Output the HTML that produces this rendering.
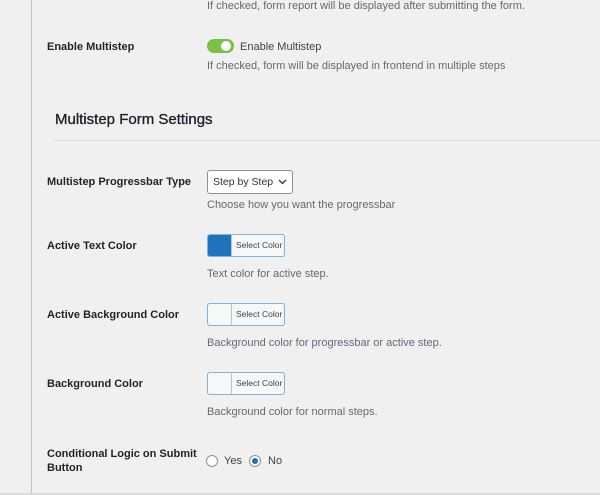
<!DOCTYPE html>
<html><head><style>
body{margin:0;width:600px;height:495px;background:#f0f0f1;font-family:"Liberation Sans",sans-serif;position:relative;overflow:hidden;color:#1d2327}
.a{position:absolute;white-space:nowrap}
.lbl{font-size:11px;font-weight:bold;color:#1d2327}
.d{font-size:11px;color:#646970}
.cp{position:absolute;left:207px;width:76px;height:21px;border:1px solid #7fb4d8;border-radius:3px;background:#f6f7f7;overflow:hidden}
.cp .sw{position:absolute;left:0;top:0;width:23px;height:21px;border-right:1px solid #c3c4c7}
.cp span{position:absolute;left:28px;top:5px;font-size:8.5px;color:#3c434a}
</style></head><body>
<div class="a" style="left:31px;top:0;width:1px;height:495px;background:#c3c4c7"></div>
<div class="a" style="left:0;top:493px;width:600px;height:2px;background:#dcdcde"></div>
<div class="a d" style="left:207px;top:0px">If checked, form report will be displayed after submitting the form.</div>
<div class="a lbl" style="left:47px;top:41px">Enable Multistep</div>
<div class="a" style="left:207px;top:39px;width:27px;height:14px;border-radius:7px;background:#7ac143"></div>
<div class="a" style="left:221px;top:41px;width:10px;height:10px;border-radius:50%;background:#fff"></div>
<div class="a" style="left:240px;top:41px;font-size:11px;color:#3c434a">Enable Multistep</div>
<div class="a d" style="left:207px;top:60px">If checked, form will be displayed in frontend in multiple steps</div>
<div class="a" style="left:55px;top:111px;font-size:15px;-webkit-text-stroke:0.35px #1d2327;color:#1d2327">Multistep Form Settings</div>
<div class="a" style="left:54px;top:140px;width:546px;height:1px;background:#dcdcde"></div>
<div class="a lbl" style="left:47px;top:176px">Multistep Progressbar Type</div>
<div class="a" style="left:207px;top:170px;width:84px;height:22px;border:1px solid #8c8f94;border-radius:3px;background:#fff"></div>
<div class="a" style="left:213px;top:176px;font-size:10.5px;color:#2c3338">Step by Step</div>
<svg class="a" style="left:278px;top:179px" width="9" height="6"><path d="M1 1l3.5 3.5L8 1" stroke="#2c3338" stroke-width="1.3" fill="none"/></svg>
<div class="a d" style="left:207px;top:199px">Choose how you want the progressbar</div>
<div class="a lbl" style="left:47px;top:240px">Active Text Color</div>
<div class="cp" style="top:234px"><div class="sw" style="background:#1e73be"></div><span>Select Color</span></div>
<div class="a d" style="left:207px;top:268px">Text color for active step.</div>
<div class="a lbl" style="left:47px;top:309px">Active Background Color</div>
<div class="cp" style="top:303px"><div class="sw"></div><span>Select Color</span></div>
<div class="a d" style="left:207px;top:337px">Background color for progressbar or active step.</div>
<div class="a lbl" style="left:47px;top:378px">Background Color</div>
<div class="cp" style="top:372px"><div class="sw"></div><span>Select Color</span></div>
<div class="a d" style="left:207px;top:406px">Background color for normal steps.</div>
<div class="a lbl" style="left:47px;top:447px;line-height:14px">Conditional Logic on Submit<br>Button</div>
<div class="a" style="left:206px;top:455px;width:10px;height:10px;border:1px solid #8c8f94;border-radius:50%;background:#fff"></div>
<div class="a" style="left:224px;top:455px;font-size:11px;color:#3c434a">Yes</div>
<div class="a" style="left:249px;top:455px;width:10px;height:10px;border:1px solid #8c8f94;border-radius:50%;background:#fff"></div>
<div class="a" style="left:252px;top:458px;width:6px;height:6px;border-radius:50%;background:#2271b1"></div>
<div class="a" style="left:268px;top:455px;font-size:11px;color:#3c434a">No</div>
</body></html>
